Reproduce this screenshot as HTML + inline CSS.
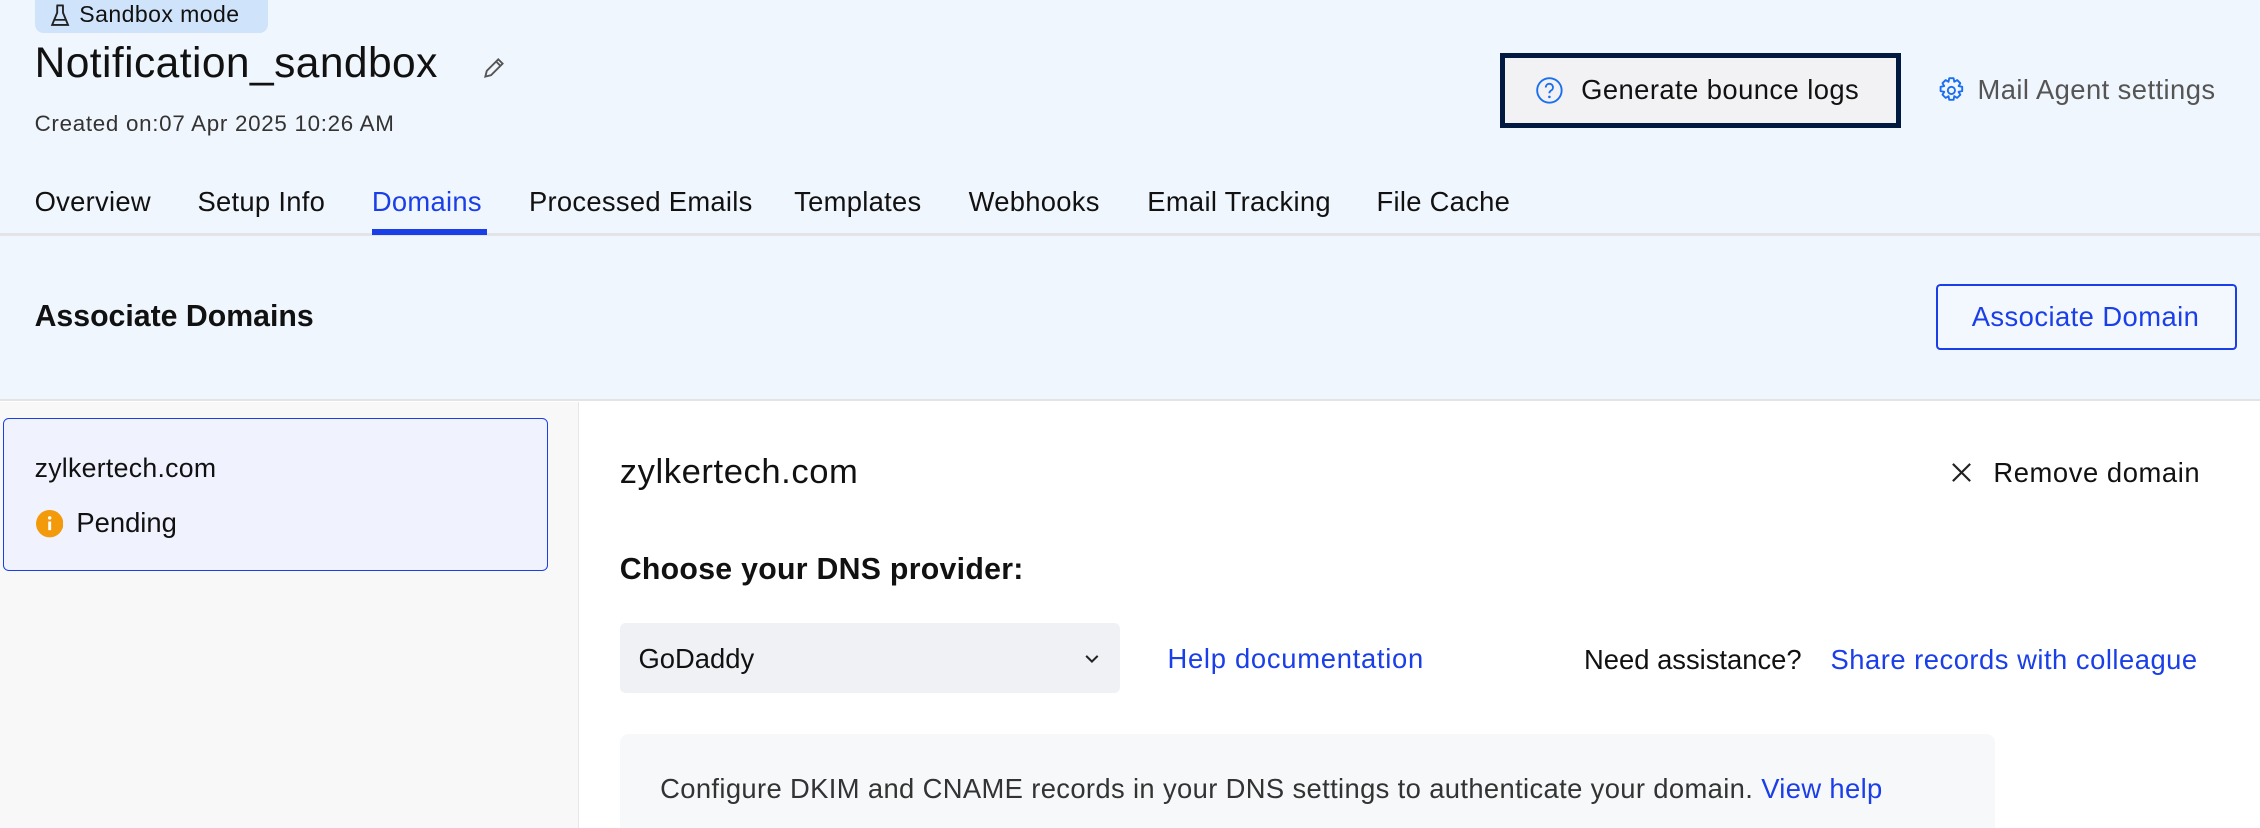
<!DOCTYPE html>
<html><head><meta charset="utf-8">
<style>
html,body{margin:0;padding:0;width:2260px;height:828px;overflow:hidden;background:#fff}
#w{position:relative;width:1568px;height:575px;zoom:1.44133;font-family:"Liberation Sans",sans-serif;color:#111;overflow:hidden}
.a{position:absolute;white-space:nowrap}
.top{position:absolute;left:0;top:0;width:1568px;height:277px;background:#f0f6fd;border-bottom:1.5px solid #e2e4e8}
.blue{color:#1a3ee8}
</style></head><body><div id="w">
<div class="top"></div>
<div class="a" style="left:24px;top:0;width:162px;height:23px;background:#cfe3fb;border-radius:0 0 6px 6px"></div>
<svg class="a" style="left:35px;top:3px" width="14" height="16" viewBox="0 0 14 16"><path d="M4.5 1h5M5 1v5L1.5 14.5h11L9 6V1" fill="none" stroke="#222" stroke-width="1.3"/><path d="M2.5 11h9" stroke="#222" stroke-width="1.2"/></svg>
<div class="a" style="left:55px;top:1px;font-size:16px;letter-spacing:0.3px">Sandbox mode</div>
<div class="a" style="left:24px;top:28px;font-size:29.5px;letter-spacing:0.3px">Notification_sandbox</div>
<svg class="a" style="left:334px;top:38px" width="18" height="18" viewBox="0 0 18 18"><path d="M3 15l1-4 8-8 3 3-8 8z M10.5 4.5l3 3" fill="none" stroke="#555" stroke-width="1.3"/></svg>
<div class="a" style="left:24px;top:77px;font-size:15.5px;color:#333;letter-spacing:0.5px">Created on:07 Apr 2025 10:26 AM</div>

<div class="a" style="left:1041px;top:37px;width:271px;height:45px;border:4px solid #031a40;background:#f2f2f4"></div>
<svg class="a" style="left:1065px;top:53px" width="20" height="20" viewBox="0 0 20 20"><circle cx="10" cy="10" r="8.5" fill="none" stroke="#1a6ef0" stroke-width="1.3"/><path d="M7.5 8a2.5 2.5 0 1 1 3.5 2.2c-.8.4-1 .9-1 1.8" fill="none" stroke="#1a6ef0" stroke-width="1.3"/><circle cx="10" cy="14.5" r=".9" fill="#1a6ef0"/></svg>
<div class="a" style="left:1097px;top:51px;font-size:19px;letter-spacing:0.3px">Generate bounce logs</div>
<svg class="a" style="left:1344px;top:53px" width="20" height="20" viewBox="0 0 20 20"><path d="M8.5 1.5h3l.5 2.5 2-1.2 2.2 2.2-1.2 2 2.5.5v3l-2.5.5 1.2 2-2.2 2.2-2-1.2-.5 2.5h-3l-.5-2.5-2 1.2-2.2-2.2 1.2-2-2.5-.5v-3l2.5-.5-1.2-2 2.2-2.2 2 1.2z" fill="none" stroke="#1a6ef0" stroke-width="1.3" stroke-linejoin="round"/><circle cx="10" cy="10" r="2.5" fill="none" stroke="#1a6ef0" stroke-width="1.3"/></svg>
<div class="a" style="left:1372px;top:51px;font-size:19px;color:#555;letter-spacing:0.3px">Mail Agent settings</div>

<div class="a" style="left:24px;top:129px;font-size:19px;letter-spacing:0.2px">Overview</div>
<div class="a" style="left:137px;top:129px;font-size:19px;letter-spacing:0.2px">Setup Info</div>
<div class="a blue" style="left:258px;top:129px;font-size:19px;letter-spacing:0.2px">Domains</div>
<div class="a" style="left:367px;top:129px;font-size:19px;letter-spacing:0.2px">Processed Emails</div>
<div class="a" style="left:551px;top:129px;font-size:19px;letter-spacing:0.2px">Templates</div>
<div class="a" style="left:672px;top:129px;font-size:19px;letter-spacing:0.2px">Webhooks</div>
<div class="a" style="left:796px;top:129px;font-size:19px;letter-spacing:0.2px">Email Tracking</div>
<div class="a" style="left:955px;top:129px;font-size:19px;letter-spacing:0.2px">File Cache</div>
<div class="a" style="left:0;top:162px;width:1568px;height:2px;background:#e2e4e8"></div>
<div class="a" style="left:258px;top:159px;width:80px;height:4px;background:#1a3ee8"></div>

<div class="a" style="left:24px;top:208px;font-size:21px;font-weight:bold">Associate Domains</div>
<div class="a" style="left:1343px;top:197px;width:206px;height:43px;border:1.5px solid #1a3ee8;border-radius:3px;background:#f3f8fe"></div>
<div class="a blue" style="left:1368px;top:209px;font-size:19px;letter-spacing:0.3px">Associate Domain</div>

<div class="a" style="left:0;top:279px;width:401px;height:296px;background:#f8f8f8;border-right:1px solid #e6e6e6"></div>
<div class="a" style="left:2px;top:290px;width:377px;height:105px;border:1.3px solid #1a3ee8;border-radius:4px;background:#f0f3fe"></div>
<div class="a" style="left:24px;top:314px;font-size:18.5px;letter-spacing:0.2px">zylkertech.com</div>
<svg class="a" style="left:25px;top:354px" width="19" height="19" viewBox="0 0 19 19"><circle cx="9.5" cy="9.5" r="9.5" fill="#f39a0b"/><rect x="8.5" y="8" width="2" height="6" fill="#fff"/><circle cx="9.5" cy="5.5" r="1.2" fill="#fff"/></svg>
<div class="a" style="left:53px;top:352px;font-size:19px">Pending</div>

<div class="a" style="left:430px;top:314px;font-size:24px;letter-spacing:0.4px">zylkertech.com</div>
<svg class="a" style="left:1353px;top:320px" width="16" height="16" viewBox="0 0 16 16"><path d="M2 2l12 12M14 2L2 14" stroke="#222" stroke-width="1.5"/></svg>
<div class="a" style="left:1383px;top:317px;font-size:19px;letter-spacing:0.4px">Remove domain</div>

<div class="a" style="left:430px;top:384px;font-size:21px;font-weight:bold;letter-spacing:0.2px">Choose your DNS provider:</div>
<div class="a" style="left:430px;top:432px;width:347px;height:49px;background:#f0f1f5;border-radius:4px"></div>
<div class="a" style="left:443px;top:446px;font-size:19px">GoDaddy</div>
<svg class="a" style="left:752px;top:453px" width="11" height="8" viewBox="0 0 11 8"><path d="M1.5 2l4 4 4-4" fill="none" stroke="#222" stroke-width="1.4"/></svg>
<div class="a blue" style="left:810px;top:446px;font-size:19px;letter-spacing:0.5px">Help documentation</div>
<div class="a" style="left:1099px;top:447px;font-size:19px">Need assistance?</div>
<div class="a blue" style="left:1270px;top:447px;font-size:19px;letter-spacing:0.35px">Share records with colleague</div>

<div class="a" style="left:430px;top:509px;width:954px;height:80px;background:#f7f8f9;border-radius:6px"></div>
<div class="a" style="left:458px;top:536px;font-size:19px;color:#333;letter-spacing:0.25px">Configure DKIM and CNAME records in your DNS settings to authenticate your domain. <span class="blue">View help</span></div>
</div></body></html>
